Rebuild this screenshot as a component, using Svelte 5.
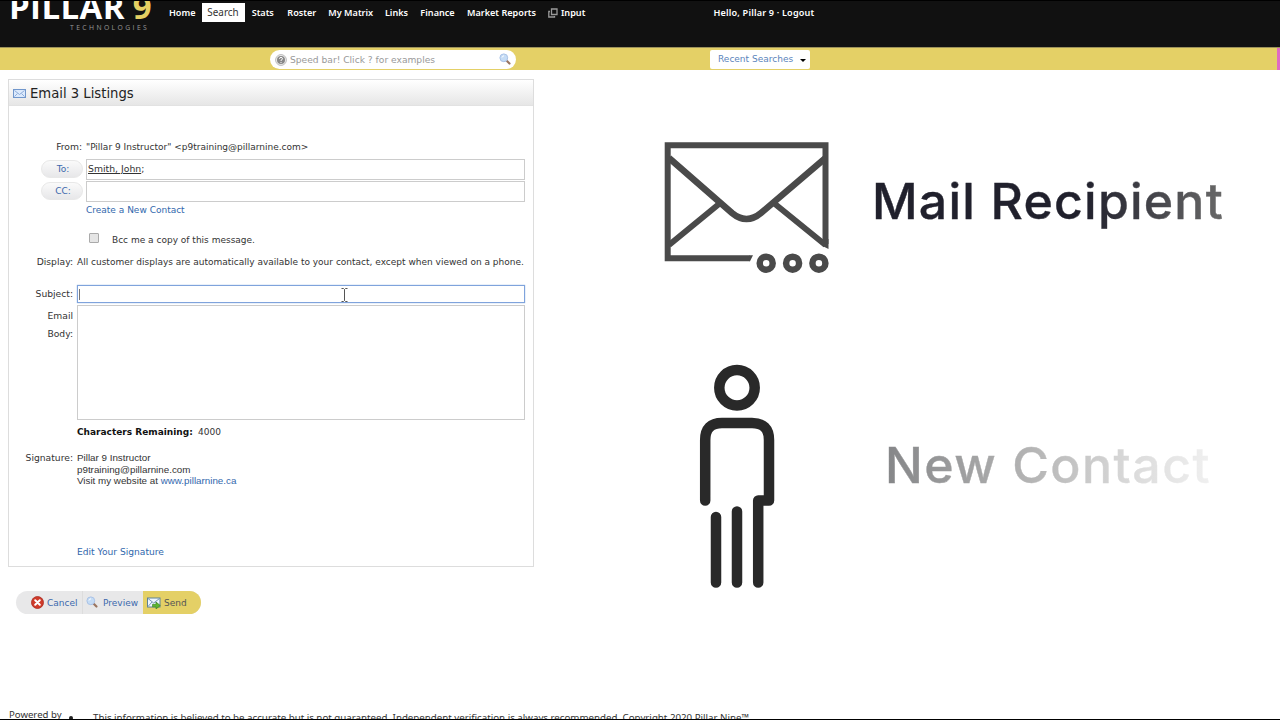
<script>
	let to = 'Smith, John;';
	let cc = '';
	let bcc = false;
	let subject = '';
	let message = '';
	const maxLength = 4000;

	const nav = [
		{ label: 'Home', width: 38.5 },
		{ label: 'Search', width: 43, active: true },
		{ label: 'Stats', width: 36.5 },
		{ label: 'Roster', width: 41.5 },
		{ label: 'My Matrix', width: 56.5 },
		{ label: 'Links', width: 35 },
		{ label: 'Finance', width: 47 },
		{ label: 'Market Reports', width: 81 }
	];
</script>

{#snippet magnifier()}
	<svg width="13" height="13" viewBox="0 0 13 13">
		<path d="M7.5 7.5L10.5 10.5" stroke="#9a7560" stroke-width="2.2" stroke-linecap="round" />
		<circle cx="4.8" cy="4.8" r="3.9" fill="#c5dcf5" stroke="#a9c2e6" stroke-width="1" />
		<path d="M3 4.5Q3.4 3 5 2.8" stroke="#fff" fill="none" />
	</svg>
{/snippet}

<div class="page">
	<header>
		<div class="logo">
			<div class="logo-name">PILLAR <span>9</span></div>
			<div class="logo-sub">TECHNOLOGIES</div>
		</div>
		<nav>
			{#each nav as item}
				<a href="#top" class:active={item.active} style="width: {item.width}px">{item.label}</a>
			{/each}
			<a href="#top" class="input-link">
				<svg width="10" height="10" viewBox="0 0 10 10" fill="none" stroke="#999">
					<path d="M3.5 1H9v5.5H3.5z" stroke-width="1.3" />
					<path d="M2 3.5H.8V9h5.7V8" stroke-width="1.3" />
				</svg>
				Input
			</a>
		</nav>
		<div class="user">Hello, Pillar 9 · Logout</div>
	</header>

	<div class="toolbar">
		<div class="speedbar">
			<svg width="12" height="12" viewBox="0 0 12 12">
				<circle cx="6" cy="6" r="5.4" fill="#eee" stroke="#bbb" stroke-width="1" />
				<circle cx="6" cy="6" r="4" fill="#888" />
				<path d="M4.5 4.8Q4.5 3.4 6 3.4T7.5 4.8Q7.5 5.6 6 6.3V7M6 8v1" fill="none" stroke="#fff" />
			</svg>
			<span>Speed bar! Click ? for examples</span>
			{@render magnifier()}
		</div>
		<div class="recent">Recent Searches <i></i></div>
		<div class="marker"></div>
	</div>

	<main>
		<div class="left">
			<section class="panel">
				<h1>
					<svg width="13" height="9" viewBox="0 0 13 9">
						<rect x=".5" y=".5" width="12" height="8" fill="#dceafc" stroke="#7197cc" />
						<path d="M1.5 1.5L6.5 5.5L11.5 1.5M1.5 7.5L4.5 4.5M11.5 7.5L8.5 4.5" fill="none" stroke="#8eaddb" />
					</svg>
					Email 3 Listings
				</h1>
				<div class="row from">
					<span class="label">From:</span>
					<span>"Pillar 9 Instructor" &lt;p9training@pillarnine.com&gt;</span>
				</div>
				<div class="row address">
					<button>To:</button>
					<div class="field"><u>{to.slice(0, -1)}</u>;</div>
				</div>
				<div class="row address">
					<button>CC:</button>
					<div class="field">{cc}</div>
				</div>
				<div class="row create"><a href="#new">Create a New Contact</a></div>
				<label class="row bcc">
					<input type="checkbox" bind:checked={bcc} />
					<span>Bcc me a copy of this message.</span>
				</label>
				<div class="row display">
					<span class="label">Display:</span>
					<span>All customer displays are automatically available to your contact, except when viewed on a phone.</span>
				</div>
				<div class="row subject">
					<span class="label">Subject:</span>
					<div class="field">
						<b class="caret"></b>{subject}
						<svg class="pointer" width="7" height="14" viewBox="0 0 7 14" fill="none" stroke="#555">
							<path d="M.5 .5H2.5L3.5 1.5L4.5 .5H6.5M3.5 1.5V12.5M.5 13.5H2.5L3.5 12.5L4.5 13.5H6.5" />
						</svg>
					</div>
				</div>
				<div class="row body">
					<span class="label">Email<br />Body:</span>
					<textarea bind:value={message}></textarea>
				</div>
				<div class="row count"><b>Characters Remaining:</b>{maxLength - message.length}</div>
				<div class="row signature">
					<span class="label">Signature:</span>
					<div class="sign">
						Pillar 9 Instructor<br />p9training@pillarnine.com<br />Visit my website at <a href="#site">www.pillarnine.ca</a>
					</div>
				</div>
				<div class="row edit"><a href="#edit">Edit Your Signature</a></div>
			</section>

			<div class="actions">
				<button class="cancel">
					<svg width="13" height="13" viewBox="0 0 13 13">
						<circle cx="6.5" cy="6.5" r="6" fill="#cf3b2b" stroke="#a92a20" stroke-width=".8" />
						<path d="M4.2 4.2L8.8 8.8M8.8 4.2L4.2 8.8" stroke="#fff" stroke-width="2" stroke-linecap="round" />
					</svg>
					Cancel
				</button>
				<button class="preview">{@render magnifier()}Preview</button>
				<button class="send">
					<svg width="14" height="12" viewBox="0 0 14 12">
						<rect x=".5" y="1" width="12.5" height="9" fill="#edf5ff" stroke="#5c8197" />
						<path d="M1 1.5L6.7 6L12.5 1.5M1 9.5L5 5M12.5 9.5L8.5 5" fill="none" stroke="#7798b5" />
						<path d="M5.5 7.3H9V5L13.3 8.5L9 12V9.8H5.5z" fill="#5cb531" stroke="#348219" stroke-width=".6" />
					</svg>
					Send
				</button>
			</div>
		</div>

		<div class="right">
			<div class="callout mail">
				<svg width="166" height="134" viewBox="0 0 166 134" fill="none" stroke="#4a4a4a" stroke-width="6">
					<path d="M85.5 117.2H3.7V4.2H161.5V103" />
					<path d="M5 17L68 72Q82.5 84 97 72L161.500 17" stroke-width="6.5" />
					<path d="M55 63L5 104M111 63L161.5 104" />
					<path d="M164.5 98v10l-6-3V98z" fill="#4a4a4a" stroke="none" />
					<path d="M85 114.2h4l-3 6h-1z" fill="#4a4a4a" stroke="none" />
					<circle cx="102.2" cy="122.200" r="6.5" stroke-width="6.5" />
					<circle cx="128.6" cy="122.200" r="6.5" stroke-width="6.5" />
					<circle cx="154.9" cy="122.200" r="6.5" stroke-width="6.5" />
				</svg>
				<h2>Mail Recipient</h2>
			</div>
			<div class="callout contact">
				<svg width="76" height="224" viewBox="0 0 76 224" fill="none" stroke="#292929" stroke-width="10.5" stroke-linecap="round" stroke-linejoin="round">
					<circle cx="38" cy="23.8" r="17.7" />
					<path d="M6.2 136.5V76Q6.2 59 23 59H53Q70 59 70 76V136.5H59.2V218.5" />
					<path d="M17 153V218.5M38 147.5V218.5" />
				</svg>
				<h2>New Contact</h2>
			</div>
		</div>
	</main>

	<footer>
		<span class="powered">Powered by</span>
		<i></i>
		<span class="notice">This information is believed to be accurate but is not guaranteed. Independent verification is always recommended. Copyright 2020 Pillar Nine™</span>
	</footer>
</div>

<style>
	:global(body) {
		margin: 0;
	}

	.page {
		display: flex;
		flex-direction: column;
		box-sizing: border-box;
		width: 1280px;
		height: 720px;
		overflow: hidden;
		border-top: 1px solid #000;
		border-bottom: 1px solid #000;
		background: #fff;
		color: #333;
		font: 9px/18px 'DejaVu Sans', sans-serif;
	}

	a {
		color: #3268ad;
		text-decoration: none;
	}

	button {
		padding: 0;
		border: 0;
		color: #3c69ad;
		font: inherit;
	}

	svg {
		display: block;
		flex: none;
	}

	header {
		display: flex;
		flex: none;
		height: 46px;
		overflow: hidden;
		background: #111;
		color: #fff;
		font: 600 9.1px/18px 'Noto Sans', sans-serif;
	}

	.logo {
		width: 163px;
		flex: none;
	}

	.logo-name {
		height: 22px;
		margin: -5px 0 0 9px;
		font: bold 33px/22px 'Open Sans', sans-serif;
		white-space: nowrap;
		letter-spacing: 0.4px;
		word-spacing: -1px;
	}

	.logo-name span {
		color: #e4d063;
	}

	.logo-sub {
		margin: 4px 0 0 70px;
		color: #999;
		font: 6.8px/12px 'Open Sans', sans-serif;
		letter-spacing: 2.4px;
	}

	nav {
		display: flex;
		width: 550.5px;
		padding-top: 2px;
	}

	nav a {
		height: 19px;
		color: #fff;
		text-align: center;
		line-height: 19px;
		white-space: nowrap;
	}

	nav a.active {
		background: #fff;
		color: #333;
		font-weight: 400;
		font-size: 9.9px;
	}

	.input-link {
		display: flex;
		align-items: center;
		gap: 3px;
		margin-left: 6px;
	}

	.user {
		padding-top: 2px;
		line-height: 19px;
		letter-spacing: 0.18px;
	}

	.toolbar {
		display: flex;
		align-items: center;
		flex: none;
		box-sizing: border-box;
		height: 23px;
		border-top: 1px solid #9c925b;
		background: #e4d066;
	}

	.speedbar {
		display: flex;
		align-items: center;
		box-sizing: border-box;
		width: 246px;
		height: 19px;
		margin-left: 270px;
		padding: 1px 4px 0 5px;
		border-radius: 10px;
		background: #fff;
		color: #999;
		font-size: 9.15px;
	}

	.speedbar span {
		flex: 1;
		margin-left: 3px;
	}

	.recent {
		display: flex;
		align-items: center;
		justify-content: space-between;
		box-sizing: border-box;
		width: 100px;
		height: 19px;
		margin-left: 194px;
		padding: 0 4px 0 8px;
		border-radius: 2px;
		background: #fff;
		color: #5b84bb;
	}

	.recent i {
		margin-top: 2px;
		border: 3px solid transparent;
		border-top: 3px solid #000;
		border-bottom: 0;
	}

	.marker {
		width: 3px;
		height: 22px;
		margin-left: auto;
		background: #df6bc2;
	}

	main {
		display: flex;
		flex: none;
		height: 638px;
	}

	.left {
		width: 526px;
		padding: 9px 0 0 8px;
	}

	.panel {
		display: flex;
		flex-direction: column;
		box-sizing: border-box;
		height: 488px;
		border: 1px solid #ddd;
	}

	h1 {
		display: flex;
		align-items: center;
		gap: 4px;
		box-sizing: border-box;
		flex: none;
		height: 26px;
		margin: 0;
		padding: 2px 0 0 4px;
		border-bottom: 1px solid #e2e2e2;
		background: linear-gradient(#fff, #e6e6e6);
		color: #222;
		font-size: 13.2px;
		font-weight: 400;
	}

	.row {
		display: flex;
		flex: none;
		white-space: nowrap;
	}

	.label {
		box-sizing: border-box;
		width: 68px;
		padding-right: 4px;
		text-align: right;
		font-size: 9.2px;
	}

	.from {
		height: 18px;
		margin-top: 32px;
	}

	.from .label {
		width: 77px;
	}

	.address {
		height: 22px;
		padding-left: 32px;
	}

	.from + .address {
		margin-top: 3px;
	}

	.address button {
		width: 42px;
		height: 18px;
		margin-top: 1px;
		padding-left: 2px;
		border: 1px solid #e8e8e8;
		border-radius: 9px;
		background: linear-gradient(#fafafa, #e7e7e9);
		line-height: 15px;
	}

	.field {
		box-sizing: border-box;
		width: 439px;
		height: 21px;
		border: 1px solid #ccc;
		line-height: 18px;
	}

	.address .field {
		margin-left: 3px;
		padding-left: 1px;
		font-size: 9.3px;
	}

	.create {
		height: 18px;
		margin: -2px 0 0 77px;
	}

	.bcc {
		height: 18px;
		margin-top: 12px;
		padding-left: 80px;
	}

	.bcc input {
		appearance: none;
		box-sizing: border-box;
		width: 10px;
		height: 10px;
		margin: 2px 13px 0 0;
		border: 1px solid #aaa;
		border-radius: 1px;
		background: #e5e5e5;
	}

	.display {
		height: 18px;
		margin-top: 4px;
	}

	.subject {
		margin-top: 14px;
	}

	.subject .field {
		position: relative;
		width: 448px;
		height: 18px;
		padding-left: 1px;
		border: 1px solid #7fa3dc;
		box-shadow: 0 0 1px #7fa3dc;
	}

	.caret {
		display: block;
		width: 1px;
		height: 11px;
		margin-top: 3px;
		background: #777;
	}

	.pointer {
		position: absolute;
		top: 2px;
		left: 263px;
	}

	.body {
		margin-top: 2px;
	}

	.body .label {
		padding-top: 2px;
		line-height: 17.5px;
	}

	textarea {
		box-sizing: border-box;
		width: 448px;
		height: 115px;
		border: 1px solid #ccc;
		outline: 0;
		resize: none;
		font: inherit;
	}

	.count {
		height: 18px;
		margin: 3px 0 0 68px;
	}

	.count b {
		width: 121px;
		color: #111;
	}

	.signature {
		height: 94px;
		margin-top: 8px;
	}

	.sign {
		padding-top: 3px;
		font: 9.8px/11.6px 'Liberation Sans', sans-serif;
	}

	.edit {
		margin-left: 68px;
		font-size: 9.15px;
	}

	.actions {
		display: flex;
		width: 185px;
		height: 23px;
		margin: 24px 0 0 8px;
		border-radius: 12px;
		overflow: hidden;
		background: #e8e8e9;
	}

	.actions button {
		display: flex;
		align-items: center;
		box-sizing: border-box;
		background: none;
	}

	.actions .cancel {
		gap: 3px;
		width: 66px;
		padding-left: 15px;
	}

	.actions .preview {
		gap: 4px;
		width: 61px;
		padding-left: 3px;
		border-left: 1px solid #ddd;
	}

	.actions .send {
		gap: 3px;
		width: 58px;
		padding-left: 4px;
		background: #e4d066;
		color: #555;
	}

	.right {
		display: flex;
		flex-direction: column;
		flex: 1;
		padding: 71px 0 0 130px;
	}

	.callout {
		display: flex;
	}

	h2 {
		margin: 0;
		color: transparent;
		background-clip: text;
		font: 500 50px/60px Inter, sans-serif;
		letter-spacing: 1.2px;
		white-space: nowrap;
		-webkit-text-stroke: 0.4px transparent;
	}

	.mail {
		height: 223px;
	}

	.mail h2 {
		margin: 30px 0 0 42px;
		background-image: linear-gradient(90deg, #20202c 60%, #666 98%);
	}

	.contact {
		padding-left: 35px;
	}

	.contact h2 {
		margin: 71px 0 0 110px;
		background-image: linear-gradient(90deg, #858688, #b5b5b5 45%, #ddd 78%, #f0f0f0);
		letter-spacing: 1.5px;
	}

	footer {
		display: flex;
		height: 11px;
		padding-left: 9px;
		overflow: hidden;
		white-space: nowrap;
	}

	.powered {
		width: 60px;
		font: 9.6px/13px 'Noto Sans', sans-serif;
	}

	footer i {
		width: 4px;
		height: 4px;
		margin-top: 8px;
		border-radius: 2px;
		background: #222;
	}

	.notice {
		margin-left: 20px;
		font: 9.73px/20px 'Noto Sans', sans-serif;
	}
</style>
